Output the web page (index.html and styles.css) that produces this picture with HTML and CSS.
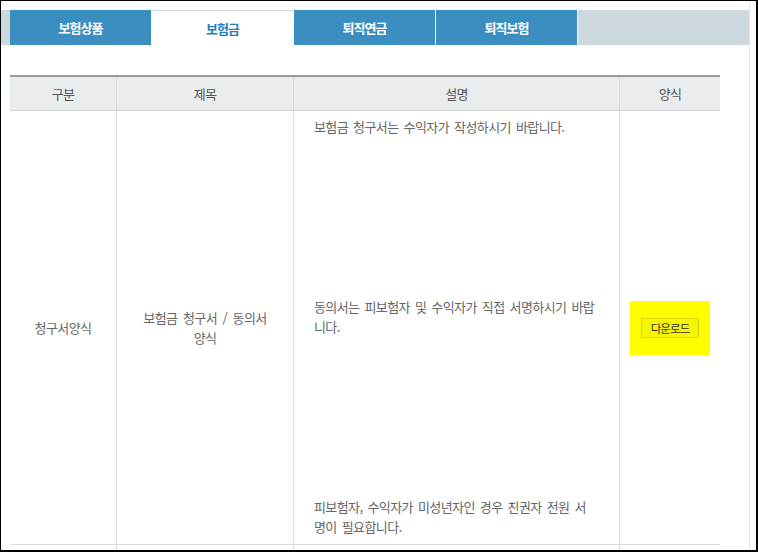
FILE: index.html
```html
<!DOCTYPE html>
<html lang="ko">
<head>
<meta charset="utf-8">
<title>보험금</title>
<link rel="stylesheet" href="styles.css">
</head>
<body>
<div class="frame">
  <div class="page">
    <nav class="tabs">
      <a class="tab">보험상품</a>
      <a class="tab active">보험금</a>
      <a class="tab">퇴직연금</a>
      <a class="tab">퇴직보험</a>
    </nav>
    <div class="table">
      <div class="row head">
        <div class="cell">구분</div>
        <div class="cell">제목</div>
        <div class="cell">설명</div>
        <div class="cell">양식</div>
      </div>
      <div class="row body">
        <div class="cell">청구서양식</div>
        <div class="cell title">보험금 청구서 / 동의서 양식</div>
        <div class="cell desc">
          <p>보험금 청구서는 수익자가 작성하시기 바랍니다.</p>
          <p>동의서는 피보험자 및 수익자가 직접 서명하시기 바랍니다.</p>
          <p>피보험자, 수익자가 미성년자인 경우 친권자 전원 서명이 필요합니다.</p>
        </div>
        <div class="cell">
          <span class="hl"><button class="btn" type="button">다운로드</button></span>
        </div>
      </div>
      <div class="row next">
        <div class="cell"></div>
        <div class="cell"></div>
        <div class="cell"></div>
        <div class="cell"></div>
      </div>
    </div>
  </div>
</div>
</body>
</html>
```
FILE: styles.css
```css
html, body {
  margin: 0;
  padding: 0;
  background: #fff;
}
body {
  font-family: "Noto Sans CJK KR", "Malgun Gothic", sans-serif;
}
.frame {
  width: 758px;
  height: 552px;
  box-sizing: border-box;
  border-style: solid;
  border-color: #000;
  border-width: 1px 2px 2px 1px;
  overflow: hidden;
  background: #fff;
}
.page {
  width: 749px;
  height: 100%;
  box-sizing: border-box;
  border-right: 1px solid #e4e4e4;
  padding-top: 9px;
}
.tabs {
  display: flex;
  height: 35px;
  background: #cdd9df;
  padding-left: 9px;
}
.tab {
  width: 142px;
  box-sizing: border-box;
  border-right: 1px solid #fff;
  background: #3a8ec0;
  color: #fff;
  font-weight: bold;
  font-size: 13px;
  letter-spacing: -1px;
  display: flex;
  align-items: center;
  justify-content: center;
}
.tab.active {
  background: #fff;
  color: #1f7dbd;
  border-top: 1px solid #cdd9df;
}
.table {
  margin: 30px 0 0 9px;
  width: 710px;
  border-top: 2px solid #9a9a9a;
  font-size: 13px;
  letter-spacing: -0.6px;
  word-spacing: 2px;
  line-height: 20px;
  color: #666;
}
.row {
  display: grid;
  grid-template-columns: 106px 177px 326px 101px;
}
.cell {
  box-sizing: border-box;
  display: flex;
  align-items: center;
  justify-content: center;
  text-align: center;
}
.cell + .cell {
  border-left: 1px solid #dadada;
}
.head .cell {
  height: 34px;
  background: #e9edee;
  border-bottom: 1px solid #d6d6d6;
  color: #555;
}
.body .cell {
  border-bottom: 1px solid #dadada;
}
.title {
  padding: 0 22px;
  word-spacing: 2.5px;
}
.desc {
  display: block;
  text-align: left;
  padding: 6px 22px 7px 20px;
}
.desc p {
  margin: 160px 0 0;
}
.desc p:first-child {
  margin-top: 0;
}
.next .cell {
  height: 20px;
}
.hl {
  display: flex;
  width: 80px;
  height: 54px;
  background: #ffff00;
  align-items: center;
  justify-content: center;
}
.btn {
  width: 58px;
  height: 20px;
  padding: 0;
  margin: 0;
  border: 1px solid #d4d400;
  border-radius: 2px;
  background: #f6f600;
  color: #333;
  font-family: "Noto Sans CJK KR", "Malgun Gothic", sans-serif;
  font-size: 11.5px;
  letter-spacing: -0.9px;
  line-height: 18px;
}
```
